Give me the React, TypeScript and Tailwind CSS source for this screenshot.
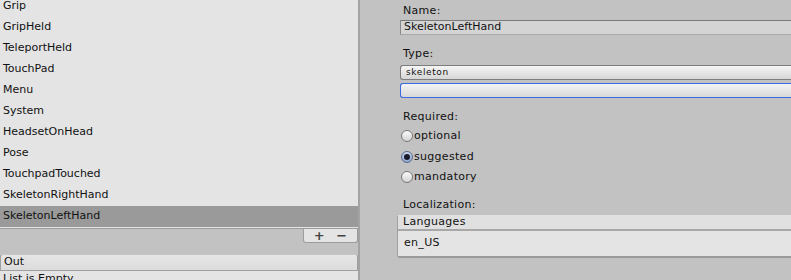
import React from "react";

const items = [
  "Grip",
  "GripHeld",
  "TeleportHeld",
  "TouchPad",
  "Menu",
  "System",
  "HeadsetOnHead",
  "Pose",
  "TouchpadTouched",
  "SkeletonRightHand",
  "SkeletonLeftHand",
];

function Radio({ checked, label }: { checked?: boolean; label: string }) {
  return (
    <div className="flex h-[20px] items-center">
      <div
        className={
          checked
            ? "flex h-[12px] w-[12px] items-center justify-center rounded-full border border-[#5a6a88] bg-gradient-to-b from-[#c9d6ee] to-[#8fa6d0]"
            : "flex h-[12px] w-[12px] items-center justify-center rounded-full border border-[#777] bg-gradient-to-b from-[#fafafa] to-[#d4d4d4]"
        }
      >
        {checked && <div className="h-[6px] w-[6px] rounded-full bg-[#1a1a2a]" />}
      </div>
      <span className="ml-[1px] text-[11px] tracking-[0.3px]">{label}</span>
    </div>
  );
}

export default function App() {
  return (
    <div
      className="flex h-[280px] w-[791px] overflow-hidden bg-[#c2c2c2] text-[#111]"
      style={{ fontFamily: '"DejaVu Sans", Verdana, sans-serif' }}
    >
      {/* Left column */}
      <div className="flex w-[360px] shrink-0 flex-col border-r-2 border-[#a3a3a3]">
        <div className="border-b border-[#9c9c9c] bg-[#e4e4e4] pb-[1px]">
          <div className="-mt-[4px]">
            {items.map((it) => (
              <div
                key={it}
                className={
                  "flex h-[21px] items-center pl-[3px] text-[11px] " +
                  (it === "SkeletonLeftHand" ? "bg-[#9a9a9a]" : "")
                }
              >
                {it}
              </div>
            ))}
          </div>
        </div>
        <div className="flex h-[16px] justify-end">
          <div className="flex w-[55px] items-center justify-around rounded-b-[3px] border border-t-0 border-[#9c9c9c] bg-[#e4e4e4] px-[4px]">
            <span className="text-[13px] font-bold leading-none text-[#444]">+</span>
            <span className="text-[13px] font-bold leading-none text-[#444]">−</span>
          </div>
        </div>
        <div className="mt-[11px] flex h-[17px] items-center rounded-t-[3px] border border-b border-[#a0a0a0] border-t-[#c8c8c8] bg-gradient-to-b from-[#e6e6e6] to-[#dcdcdc] pl-[3px] text-[11px]">
          Out
        </div>
        <div className="flex h-[20px] items-center bg-[#e4e4e4] pl-[3px] text-[11px]">List is Empty</div>
      </div>

      {/* Right column */}
      <div className="flex flex-1 flex-col pl-[40px] pt-[3px]">
        <div className="h-[15px] pl-[3px] text-[11px] leading-[15px] tracking-[0.3px]">Name:</div>
        <div className="mt-[2px] flex h-[15px] items-center border-y border-l border-t-[#7a7a7a] border-b-[#a9a9a9] border-l-[#8a8a8a] bg-[#d4d4d4] pl-[3px] text-[11px]">
          SkeletonLeftHand
        </div>
        <div className="mt-[11px] h-[15px] pl-[3px] text-[11px] leading-[15px] tracking-[0.3px]">Type:</div>
        <div className="mt-[4px] flex h-[15px] items-center rounded-l-[3px] border-y border-l border-[#7c7c7c] bg-gradient-to-b from-[#f6f6f6] to-[#d6d6d6] pl-[5px] text-[9px] tracking-[0.6px]">
          skeleton
        </div>
        <div className="mt-[3px] h-[15px] rounded-l-[3px] border-y border-l border-[#3d6ae0] bg-gradient-to-b from-[#f4f4f4] to-[#d8d8d8]" />
        <div className="mt-[11px] h-[15px] pl-[3px] text-[11px] leading-[15px] tracking-[0.3px]">Required:</div>
        <div className="mt-[2px] flex flex-col pl-[1px]">
          <Radio label="optional" />
          <div className="mt-[1px]">
            <Radio checked label="suggested" />
          </div>
          <Radio label="mandatory" />
        </div>
        <div className="mt-[10px] h-[15px] pl-[3px] text-[11px] leading-[15px] tracking-[0.3px]">Localization:</div>
        <div className="-ml-[3px] mt-[3px] flex flex-col rounded-l-[3px] border-l border-b-2 border-[#a0a0a0] border-b-[#9a9a9a]">
          <div className="flex h-[16px] items-center border-b-2 border-[#a8a8a8] bg-[#e0e0e0] pl-[5px] text-[11px] tracking-[0.3px]">
            Languages
          </div>
          <div className="flex h-[25px] items-center bg-[#e4e4e4] pl-[6px] text-[11px] tracking-[0.3px]">en_US</div>
        </div>
      </div>
    </div>
  );
}
